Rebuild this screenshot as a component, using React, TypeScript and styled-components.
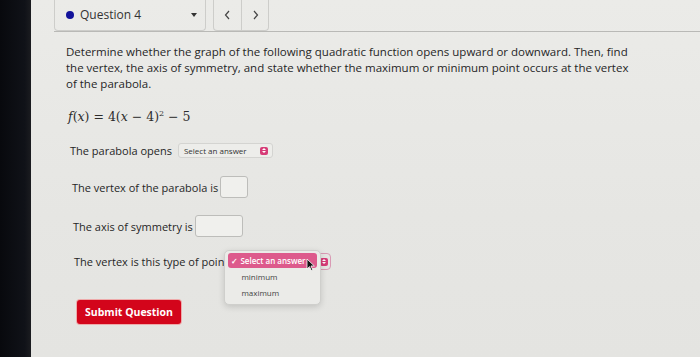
import * as React from 'react';
import styled, { createGlobalStyle } from 'styled-components';

const GlobalStyle = createGlobalStyle`
  html, body {
    margin: 0;
    padding: 0;
    background: #e7e7e4;
  }
  body {
    font-family: "Open Sans", "Liberation Sans", sans-serif;
    color: #2f2f2f;
  }
`;

const Page = styled.div`
  display: flex;
  width: 700px;
  height: 357px;
  overflow: hidden;
`;

const Bezel = styled.div`
  width: 31px;
  flex: none;
  background: linear-gradient(90deg, #08090d 0%, #101218 80%, #1b1c20 100%);
`;

const Main = styled.div`
  flex: 1;
  padding-left: 23px;
  background: linear-gradient(180deg, #ebebe8 0%, #e6e6e3 60%, #e4e4e1 100%);
`;

const TopBar = styled.div`
  display: flex;
  align-items: stretch;
  gap: 7px;
  height: 31px;
  border-bottom: 1px solid #b9b9b6;
`;

const QuestionSelect = styled.div`
  display: flex;
  align-items: center;
  width: 152px;
  margin-top: -4px;
  padding: 3px 8px 0 11px;
  border: 1px solid #cdcdca;
  border-top: none;
  border-radius: 0 0 4px 4px;
  font-size: 12px;
  color: #333;
  box-sizing: border-box;
`;

const Dot = styled.span`
  width: 8px;
  height: 8px;
  border-radius: 50%;
  background: #12129a;
  margin-right: 6px;
`;

const Caret = styled.span`
  margin-left: auto;
  width: 0;
  height: 0;
  border-left: 3px solid transparent;
  border-right: 3px solid transparent;
  border-top: 4px solid #333;
`;

const NavGroup = styled.div`
  display: flex;
  margin-top: -4px;
  border: 1px solid #cdcdca;
  border-top: none;
  border-radius: 0 0 4px 4px;
`;

const NavButton = styled.button`
  width: 27px;
  padding: 3px 0 0;
  border: none;
  background: transparent;
  display: flex;
  align-items: center;
  justify-content: center;
  & + & {
    border-left: 1px solid #cdcdca;
  }
`;

const Content = styled.div`
  padding: 12px 0 0 12px;
  width: 568px;
`;

const Prompt = styled.p`
  margin: 0;
  font-size: 11.5px;
  line-height: 16px;
  color: #262626;
`;

const Formula = styled.div`
  margin: 17px 0 0 2px;
  font-family: "DejaVu Serif", "Liberation Serif", serif;
  font-size: 12.5px;
  color: #2c2c2c;
  i {
    font-style: italic;
  }
  sup {
    font-size: 8px;
  }
`;

const Row = styled.div<{ $indent: number; $top: number }>`
  position: relative;
  display: flex;
  align-items: center;
  margin: ${p => p.$top}px 0 0 ${p => p.$indent}px;
  font-size: 11px;
  color: #262626;
`;

const Select = styled.div`
  display: flex;
  align-items: center;
  justify-content: space-between;
  margin-left: 6px;
  width: 95px;
  height: 15px;
  padding: 0 4px 0 5px;
  border: 1px solid #d4d4d1;
  border-radius: 3px;
  background: #ededea;
  font-size: 8px;
  color: #333;
  box-sizing: border-box;
`;

const SelectIcon = styled.span`
  display: inline-flex;
  flex-direction: column;
  align-items: center;
  justify-content: center;
  gap: 1px;
  width: 8px;
  height: 8px;
  border-radius: 2px;
  background: #d63c77;
  &::before, &::after {
    content: '';
    width: 0;
    height: 0;
    border-left: 2px solid transparent;
    border-right: 2px solid transparent;
  }
  &::before {
    border-bottom: 2px solid #fff;
  }
  &::after {
    border-top: 2px solid #fff;
  }
`;

const TextBox = styled.div<{ $w: number }>`
  width: ${p => p.$w}px;
  height: 22px;
  margin-left: 2px;
  border: 1px solid #bdbdba;
  border-radius: 3px;
  background: #f0f0ed;
  box-sizing: border-box;
`;

const OpenSelect = styled.div`
  position: relative;
  display: flex;
  align-items: center;
  width: 104px;
  height: 17px;
  margin-left: 3px;
  border: 1px solid #d99ab4;
  border-radius: 4px;
  justify-content: flex-end;
  padding-right: 2px;
  box-sizing: border-box;
`;

const Menu = styled.div`
  position: absolute;
  left: -4px;
  top: -4px;
  width: 97px;
  padding: 2px 3px 4px;
  border: 1px solid #cfcfcc;
  border-radius: 5px;
  background: #ebebe8;
  box-shadow: 0 2px 6px rgba(0, 0, 0, 0.15);
  box-sizing: border-box;
  z-index: 2;
`;

const MenuItem = styled.div<{ $active?: boolean }>`
  height: ${p => (p.$active ? 15 : 16)}px;
  display: flex;
  align-items: center;
  padding-left: ${p => (p.$active ? 3 : 13)}px;
  border-radius: 3px;
  font-size: 8px;
  white-space: nowrap;
  overflow: hidden;
  background: ${p => (p.$active ? '#dd5a8c' : 'transparent')};
  color: ${p => (p.$active ? '#fff' : '#444')};
  font-weight: ${p => (p.$active ? 600 : 400)};
`;

const Cursor = styled.svg`
  position: absolute;
  left: 78px;
  top: 4px;
  z-index: 3;
`;

const SubmitButton = styled.button`
  margin: 30px 0 0 11px;
  width: 104px;
  height: 24px;
  border: none;
  border-radius: 3px;
  background: #d3051b;
  box-shadow: 0 0 0 1px #eaa;
  color: #fff;
  font-family: "Open Sans", "Liberation Sans", sans-serif;
  font-size: 10.5px;
  font-weight: 700;
  white-space: nowrap;
  padding: 0;
`;

const Chevron = ({ dir }: { dir: 'l' | 'r' }) => (
  <svg width="7" height="10" viewBox="0 0 7 10">
    <path
      d={dir === 'l' ? 'M5 1 L1.5 5 L5 9' : 'M2 1 L5.5 5 L2 9'}
      fill="none"
      stroke="#444"
      strokeWidth="1.2"
    />
  </svg>
);

export default function App() {
  return (
    <>
      <GlobalStyle />
      <Page>
        <Bezel />
        <Main>
          <TopBar>
            <QuestionSelect>
              <Dot />
              Question 4
              <Caret />
            </QuestionSelect>
            <NavGroup>
              <NavButton><Chevron dir="l" /></NavButton>
              <NavButton><Chevron dir="r" /></NavButton>
            </NavGroup>
          </TopBar>
          <Content>
            <Prompt>
              Determine whether the graph of the following quadratic function opens upward or downward. Then, find
              the vertex, the axis of symmetry, and state whether the maximum or minimum point occurs at the vertex
              of the parabola.
            </Prompt>
            <Formula>
              <i>f</i>(<i>x</i>) = 4(<i>x</i> − 4)<sup>2</sup> − 5
            </Formula>
            <Row $indent={4} $top={19}>
              The parabola opens
              <Select>
                Select an answer
                <SelectIcon />
              </Select>
            </Row>
            <Row $indent={6} $top={18}>
              The vertex of the parabola is
              <TextBox $w={28} />
            </Row>
            <Row $indent={7} $top={17}>
              The axis of symmetry is
              <TextBox $w={48} />
            </Row>
            <Row $indent={8} $top={16}>
              The vertex is this type of poin
              <OpenSelect>
                <SelectIcon />
                <Menu>
                  <MenuItem $active>✓ Select an answer</MenuItem>
                  <MenuItem>minimum</MenuItem>
                  <MenuItem>maximum</MenuItem>
                </Menu>
                <Cursor width="10" height="14" viewBox="0 0 10 14">
                  <path d="M1 1 L1 11 L3.5 8.6 L5.3 12.6 L6.8 11.9 L5 8 L8.4 8 Z" fill="#111" stroke="#fff" strokeWidth="0.8" />
                </Cursor>
              </OpenSelect>
            </Row>
            <SubmitButton>Submit Question</SubmitButton>
          </Content>
        </Main>
      </Page>
    </>
  );
}
